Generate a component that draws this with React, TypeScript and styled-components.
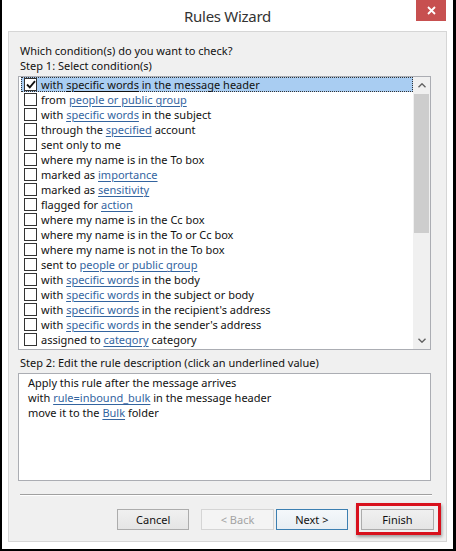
import React from "react";
import styled, { createGlobalStyle, css } from "styled-components";

const Global = createGlobalStyle`
  html, body { margin: 0; padding: 0; background: #000; }
  body { font-family: "Noto Sans", "Open Sans", sans-serif; }
  * { box-sizing: border-box; }
`;

const UI_FONT = `"Noto Sans", "Open Sans", sans-serif`;

const Window = styled.div`
  margin-left: 2px;
  width: 451px;
  height: 549px;
  background: #ffffff;
  display: flex;
  flex-direction: column;
  font-family: ${UI_FONT};
  font-size: 11px;
  color: #111;
`;

const TitleBar = styled.div`
  height: 31px;
  flex: 0 0 31px;
  display: grid;
  grid-template-columns: 1fr auto 1fr;
  align-items: start;
`;

const Title = styled.div`
  grid-column: 2;
  padding-top: 6px;
  font-size: 15px;
  letter-spacing: -0.3px;
  line-height: 20px;
  color: #333;
`;

const Close = styled.div`
  grid-column: 3;
  justify-self: end;
  margin-right: 7px;
  width: 30px;
  height: 21px;
  background: #c75050;
  display: flex;
  align-items: center;
  justify-content: center;
`;

const Panel = styled.div`
  flex: 1;
  margin: 0 6px 7px 6px;
  background: #f0f0f0;
  border: 1px solid #d6d6d6;
  padding: 11px 12px 0 9px;
  display: flex;
  flex-direction: column;
`;

const Label = styled.div<{ $mt?: number }>`
  line-height: 15px;
  height: 15px;
  padding-left: 2px;
  margin-top: ${(p) => p.$mt ?? 0}px;
  white-space: nowrap;
`;

const ListBox = styled.div`
  margin-top: 3px;
  width: 413px;
  height: 274px;
  border: 1px solid #abadb3;
  background: #fff;
  display: grid;
  grid-template-columns: 1fr 17px;
`;

const Rows = styled.div`
  display: flex;
  flex-direction: column;
  overflow: hidden;
`;

const Row = styled.div<{ $selected?: boolean }>`
  height: 15px;
  flex: 0 0 15px;
  margin-left: 2px;
  padding-left: 2px;
  display: flex;
  align-items: center;
  gap: 4px;
  white-space: nowrap;
  line-height: 15px;
  border: 1px solid transparent;
  ${(p) =>
    p.$selected &&
    css`
      background: #a9cdf2;
      border: 1px dotted #333;
    `}
`;

const Box = styled.span`
  width: 13px;
  height: 13px;
  flex: 0 0 13px;
  border: 1px solid #333;
  background: #fff;
  display: inline-flex;
  align-items: center;
  justify-content: center;
`;

const Link = styled.span<{ $plain?: boolean }>`
  color: ${(p) => (p.$plain ? "inherit" : "#33649f")};
  text-decoration: underline;
  text-underline-offset: 2px;
`;

const ScrollBar = styled.div`
  background: #f0f0f0;
  display: flex;
  flex-direction: column;
`;

const Arrow = styled.div`
  height: 17px;
  flex: 0 0 17px;
  display: flex;
  align-items: center;
  justify-content: center;
`;

const Thumb = styled.div`
  height: 139px;
  margin: 0 1px;
  background: #cdcdcd;
`;

const Track = styled.div`
  flex: 1;
`;

const DescBox = styled.div`
  margin-top: 3px;
  width: 413px;
  height: 108px;
  border: 1px solid #abadb3;
  background: #fff;
  padding: 1px 9px;
  line-height: 15px;
`;

const Separator = styled.div`
  margin: 13px 0 0 2px;
  height: 1px;
  width: 412px;
  background: #a0a0a0;
  box-shadow: 0 1px 0 #fff;
`;

const ButtonRow = styled.div`
  margin-top: 14px;
  display: flex;
  padding-left: 99px;
`;

const Button = styled.div<{ $variant?: "default" | "disabled" | "primary"; $ml?: number }>`
  width: 73px;
  height: 21px;
  margin-left: ${(p) => p.$ml ?? 0}px;
  display: flex;
  align-items: center;
  justify-content: center;
  border: 1px solid #acacac;
  background: linear-gradient(#f0f0f0, #e5e5e5);
  color: #111;
  line-height: 15px;
  ${(p) =>
    p.$variant === "disabled" &&
    css`
      border-color: #d5d5d5;
      background: #f4f4f4;
      color: #a3a3a3;
    `}
  ${(p) =>
    p.$variant === "primary" &&
    css`
      border-color: #3c7fb1;
      background: linear-gradient(#f4f8fb, #e8eef3);
    `}
`;

const Highlight = styled.div`
  position: relative;
  margin-left: 13px;
  &::after {
    content: "";
    position: absolute;
    left: -5px;
    right: -7px;
    top: -6px;
    bottom: -5px;
    border: 3px solid #d8111d;
    box-shadow: 1px 2px 3px rgba(0, 0, 0, 0.35);
    pointer-events: none;
  }
`;

const conditions = [
  "with {specific words} in the message header",
  "from {people or public group}",
  "with {specific words} in the subject",
  "through the {specified} account",
  "sent only to me",
  "where my name is in the To box",
  "marked as {importance}",
  "marked as {sensitivity}",
  "flagged for {action}",
  "where my name is in the Cc box",
  "where my name is in the To or Cc box",
  "where my name is not in the To box",
  "sent to {people or public group}",
  "with {specific words} in the body",
  "with {specific words} in the subject or body",
  "with {specific words} in the recipient's address",
  "with {specific words} in the sender's address",
  "assigned to {category} category",
];

function renderText(t: string, plain?: boolean) {
  const parts = t.split(/(\{[^}]+\})/);
  return parts.map((p, i) =>
    p.startsWith("{") ? (
      <Link key={i} $plain={plain}>
        {p.slice(1, -1)}
      </Link>
    ) : (
      <React.Fragment key={i}>{p}</React.Fragment>
    )
  );
}

const Check = () => (
  <svg width="10" height="9" viewBox="0 0 10 9">
    <path d="M1 4.5 L3.8 7.3 L9 1.2" stroke="#111" strokeWidth="1.8" fill="none" />
  </svg>
);

const Chevron = ({ down }: { down?: boolean }) => (
  <svg width="8" height="5" viewBox="0 0 8 5">
    <path
      d={down ? "M0.5 0.8 L4 4.2 L7.5 0.8" : "M0.5 4.2 L4 0.8 L7.5 4.2"}
      stroke="#606060"
      strokeWidth="1.4"
      fill="none"
    />
  </svg>
);

export default function App() {
  return (
    <>
      <Global />
      <Window>
        <TitleBar>
          <Title>Rules Wizard</Title>
          <Close>
            <svg width="9" height="9" viewBox="0 0 9 9">
              <path d="M1 1 L8 8 M8 1 L1 8" stroke="#fff" strokeWidth="1.8" />
            </svg>
          </Close>
        </TitleBar>
        <Panel>
          <Label>Which condition(s) do you want to check?</Label>
          <Label>Step 1: Select condition(s)</Label>
          <ListBox>
            <Rows>
              {conditions.map((c, i) => (
                <Row key={i} $selected={i === 0}>
                  <Box>{i === 0 && <Check />}</Box>
                  <span>{renderText(c, i === 0)}</span>
                </Row>
              ))}
            </Rows>
            <ScrollBar>
              <Arrow>
                <Chevron />
              </Arrow>
              <Thumb />
              <Track />
              <Arrow>
                <Chevron down />
              </Arrow>
            </ScrollBar>
          </ListBox>
          <Label $mt={5}>Step 2: Edit the rule description (click an underlined value)</Label>
          <DescBox>
            <div>Apply this rule after the message arrives</div>
            <div>{renderText("with {rule=inbound_bulk} in the message header")}</div>
            <div>{renderText("move it to the {Bulk} folder")}</div>
          </DescBox>
          <Separator />
          <ButtonRow>
            <Button>Cancel</Button>
            <Button $variant="disabled" $ml={12}>
              &lt; Back
            </Button>
            <Button $variant="primary" $ml={2}>
              Next &gt;
            </Button>
            <Highlight>
              <Button>Finish</Button>
            </Highlight>
          </ButtonRow>
        </Panel>
      </Window>
    </>
  );
}
